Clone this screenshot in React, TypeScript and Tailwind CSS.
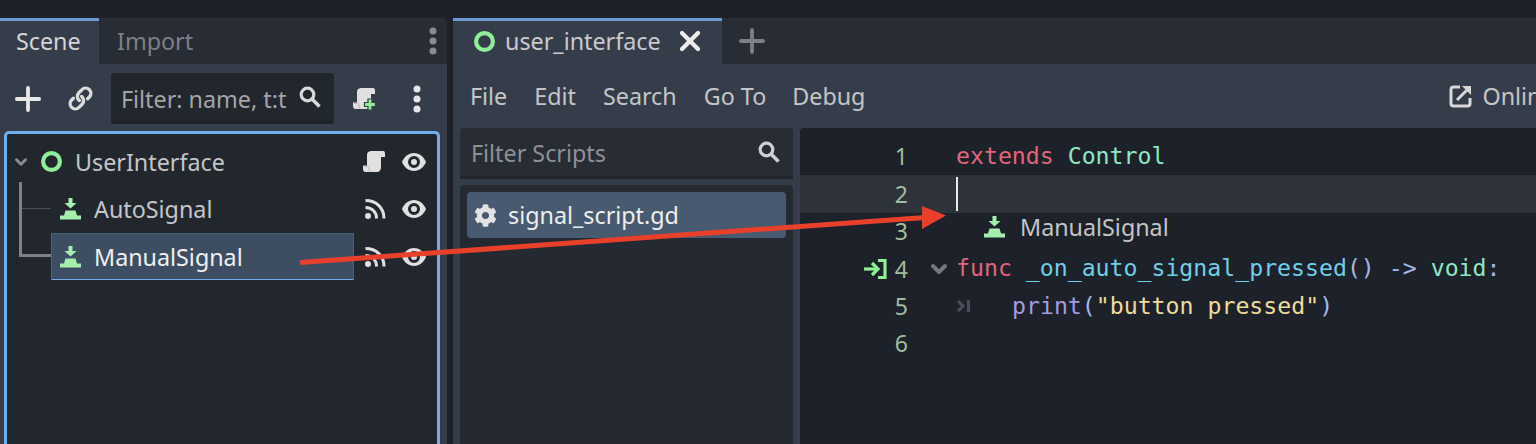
import { Link, Plus, X, ChevronDown } from 'lucide-react';
import { FaCog } from 'react-icons/fa';

const ui = "font-['Noto_Sans',sans-serif]";
const mono = "font-['DejaVu_Sans_Mono',monospace]";

function NodeRing({ className }: { className?: string }) {
  return (
    <svg viewBox="0 0 20 20" className={className}>
      <circle cx="10" cy="10" r="8" fill="none" stroke="#8eef97" strokeWidth="4" />
    </svg>
  );
}

function ButtonIcon({ className }: { className?: string }) {
  return (
    <svg viewBox="0 0 21 22" className={className} fill="#a5efac">
      <path d="M8.500 0h4v5h4l-6 5.500-6-5.500h4z" />
      <path d="M5.500 12.500h10L17 17.500h4v4H0v-4h4z" />
    </svg>
  );
}

function ScrollIcon({ className, plus }: { className?: string; plus?: boolean }) {
  return (
    <svg viewBox="0 0 24 24" className={className}>
      <path
        fill="#e0e0e0"
        d="M9.500 1H21c1.600 0 2 1 2 2.500V7h-4v10c0 3-1.600 5-4 5H3.500C1.500 22 1 20.500 1 19v-3.500h4V4.500C5 2.500 7 1 9.500 1z"
      />
      <path fill="none" stroke="#b8b8b8" strokeWidth="1" d="M2 16.500h3.500c1 0 1.500 1 1.500 2.500s.6 2.500 1.500 2.500" />
      {plus && <path fill="#8eef97" stroke="#363d4a" strokeWidth="1.200" d="M16 12h4v3.500h3.500v4H20V23h-4v-3.500h-3.500v-4H16z" />}
    </svg>
  );
}

function EyeIcon() {
  return (
    <svg viewBox="0 0 24 18" className="w-6 h-[18px]">
      <path
        fillRule="evenodd"
        fill="#e0e0e0"
        d="M12 0C6.500 0 2.200 3.800 0 9c2.200 5.200 6.500 9 12 9s9.800-3.800 12-9C21.800 3.800 17.500 0 12 0zm0 3a6 6 0 1 1 0 12 6 6 0 0 1 0-12z"
      />
      <circle cx="12" cy="9" r="3" fill="#e0e0e0" />
    </svg>
  );
}

function SignalIcon() {
  return (
    <svg viewBox="0 0 22 22" className="w-[22px] h-[22px]" fill="none" stroke="#e0e0e0" strokeWidth="3">
      <circle cx="4" cy="18" r="3" fill="#e0e0e0" stroke="none" />
      <path d="M1.500 9.500c6.500 0 11 4.500 11 11" />
      <path d="M1.500 2.500c11 0 18.500 7.500 18.500 18" />
    </svg>
  );
}

function DotsIcon({ color, className }: { color: string; className?: string }) {
  return (
    <svg viewBox="0 0 8 28" className={className} fill={color}>
      <circle cx="4" cy="4" r="3.500" />
      <circle cx="4" cy="14" r="3.500" />
      <circle cx="4" cy="24" r="3.500" />
    </svg>
  );
}

function SearchIcon({ color, className }: { color: string; className?: string }) {
  return (
    <svg viewBox="0 0 22 22" className={className} fill="none" stroke={color}>
      <circle cx="8.500" cy="8.500" r="6.300" strokeWidth="3.200" />
      <path d="M13 13l7.500 7.500" strokeWidth="3.500" />
    </svg>
  );
}

function TreeRow({ name, icon, selected, right }: { name: string; icon: React.ReactNode; selected?: boolean; right: React.ReactNode }) {
  return (
    <div className={`flex items-center h-[47px] ${selected ? 'mt-[1px]' : ''}`}>
      <div
        className={`flex items-center w-[303px] h-full text-[23.3px] ${
          selected
            ? 'pl-[8px] bg-[#3d4e63] border border-[#4c6076] border-b-[#70aeeb] text-[#f0f0f0] rounded-[1px]'
            : 'pl-[9px] text-[#c4c5c7]'
        }`}
      >
        {icon}
        <span className="ml-[13px] pt-[2px]">{name}</span>
      </div>
      {right}
    </div>
  );
}

function CodeRow({ n, active, gutter, fold, children }: { n: number; active?: boolean; gutter?: React.ReactNode; fold?: boolean; children?: React.ReactNode }) {
  return (
    <div className={`flex items-center h-[37.4px] ${active ? 'bg-[#2e323b]' : ''}`}>
      <div className="flex items-center w-[156px] shrink-0">
        <div className="w-[63px] shrink-0" />
        <div className="w-[26px] flex items-center shrink-0">{gutter}</div>
        <div className="w-[19px] text-right text-[23px] text-[#a3bb9f] shrink-0">{n}</div>
        <div className="w-[48px] pl-[19px] shrink-0">
          {fold && <ChevronDown className="w-[24px] h-[24px] text-[#74777c]" strokeWidth={4} />}
        </div>
      </div>
      <div className={`flex items-center text-[23.2px] whitespace-pre ${mono}`}>{children}</div>
    </div>
  );
}

export default function App() {
  return (
    <div className={`relative w-[1536px] h-[444px] overflow-hidden bg-[#1e2129] ${ui}`}>
      <div className="h-[18px]" />
      <div className="flex h-[426px]">
        {/* scene dock */}
        <div className="w-[447px] flex flex-col bg-[#363d4a] rounded-tr-md">
          <div className="flex h-[46px] bg-[#282c34] rounded-tr-md">
            <div className="w-[99px] bg-[#363d4a] border-t-[3px] border-[#6b9bd4] pl-[16px] text-[23.3px] text-[#d3d4d6] leading-[40px]">Scene</div>
            <div className="pl-[18px] text-[23.3px] text-[#7d8087] leading-[46px]">Import</div>
            <div className="ml-auto mr-[10px] flex items-center">
              <DotsIcon color="#8a8c91" className="w-[8px] h-[28px]" />
            </div>
          </div>
          <div className="flex items-center h-[67px] pt-[2px] pl-[9px]">
            <Plus className="w-[38px] h-[38px] text-[#e8e8e8]" strokeWidth={2.400} />
            <Link className="w-[25px] h-[25px] ml-[21px] text-[#dcdcdc] scale-x-[-1] rotate-90" strokeWidth={3.200} />
            <div className="flex items-center w-[223px] h-[51px] ml-[18px] px-[10px] bg-[#22262d] border-b-[3px] border-[#1e2127] rounded-[3px] text-[23.3px] text-[#a3a5a9]">
              <span className="whitespace-nowrap pt-[5px]">Filter: name, t:t</span>
              <SearchIcon color="#d8d8d8" className="w-[22px] h-[22px] ml-auto mr-[3px]" />
            </div>
            <ScrollIcon plus className="w-[24px] h-[24px] ml-[18px]" />
            <DotsIcon color="#e6e6e6" className="w-[8px] h-[28px] ml-[37px]" />
          </div>
          <div className="relative flex-1 ml-[4px] mr-[7px] pt-[4px] bg-[#22272e] border-[3px] border-b-0 border-[#70aeeb] rounded-t-[5px]">
            {/* tree guide lines */}
            <div className="absolute left-[12px] top-[48px] w-[3px] h-[75px] bg-[#7f8185]" />
            <div className="absolute left-[12px] top-[120px] w-[32px] h-[3px] bg-[#7f8185]" />
            <div className="absolute left-[15px] top-[74px] w-[29px] h-[1px] bg-[#4a4d52]" />

            <div className="flex items-center h-[47px] pl-[5px] text-[23.3px] text-[#c4c5c7]">
              <ChevronDown className="w-[18px] h-[18px] text-[#8a8c90]" strokeWidth={4} />
              <NodeRing className="w-[21px] h-[21px] ml-[11px]" />
              <span className="ml-[13px] pt-[2px]">UserInterface</span>
              <ScrollIcon className="w-[24px] h-[24px] ml-auto" />
              <span className="ml-[16px] mr-[11px]"><EyeIcon /></span>
            </div>
            <div className="pl-[44px]">
              <TreeRow
                name="AutoSignal"
                icon={<ButtonIcon className="w-[21px] h-[22px]" />}
                right={<div className="flex items-center ml-[10px] gap-[16px]"><SignalIcon /><EyeIcon /></div>}
              />
              <TreeRow
                selected
                name="ManualSignal"
                icon={<ButtonIcon className="w-[21px] h-[22px]" />}
                right={<div className="flex items-center ml-[10px] gap-[16px]"><SignalIcon /><EyeIcon /></div>}
              />
            </div>
          </div>
        </div>

        {/* script editor */}
        <div className="w-[1083px] ml-[6px] flex flex-col bg-[#363d4a]">
          <div className="flex h-[46px] bg-[#282c34] items-stretch">
            <div className="flex items-center w-[269px] bg-[#363d4a] border-t-[3px] border-[#6b9bd4] pl-[21px] pb-[3px] text-[23.3px] text-[#c9cacd]">
              <NodeRing className="w-[21px] h-[21px]" />
              <span className="ml-[10px]">user_interface</span>
              <X className="w-[32px] h-[32px] ml-[13px] text-[#ececec]" strokeWidth={3.200} />
            </div>
            <div className="flex items-center ml-[11px]">
              <Plus className="w-[38px] h-[38px] text-[#7c7f85]" strokeWidth={2.400} />
            </div>
          </div>
          <div className="flex items-center h-[64px] pl-[17px] text-[23.3px] text-[#c4c5c8] whitespace-nowrap">
            <span>File</span>
            <span className="ml-[27px]">Edit</span>
            <span className="ml-[27px]">Search</span>
            <span className="ml-[27px]">Go To</span>
            <span className="ml-[26px]">Debug</span>
            <svg viewBox="0 0 24 24" className="w-[24px] h-[24px] ml-[584px] shrink-0" fill="none" stroke="#d8d8d8" strokeWidth="3">
              <path d="M11 3H4.500C3 3 2 4 2 5.500v14C2 21 3 22 4.500 22h14c1.500 0 2.500-1 2.500-2.500V14" />
              <path d="M8 16L20 4" />
              <path d="M13 2h9v9z" fill="#d8d8d8" stroke="none" />
            </svg>
            <span className="ml-[9px]">Online Docs</span>
          </div>
          <div className="flex flex-1 min-h-0 pl-[7px]">
            <div className="w-[333px] flex flex-col gap-[6px]">
              <div className="flex items-center h-[51px] px-[11px] bg-[#282c34] border-b-[3px] border-[#22262c] rounded-t-[4px] text-[23.3px] text-[#8e9095]">
                <span className="pt-[3px]">Filter Scripts</span>
                <SearchIcon color="#d0d0d0" className="w-[22px] h-[22px] ml-auto mr-[2px]" />
              </div>
              <div className="flex-1 p-[7px] bg-[#252a32] rounded-t-[4px]">
                <div className="flex items-center h-[46px] pl-[7px] bg-[#475a70] rounded-[4px] text-[23.3px] text-[#eeeeee]">
                  <FaCog className="w-[23px] h-[23px] text-[#e2e2e2]" />
                  <span className="ml-[11px]">signal_script.gd</span>
                </div>
              </div>
            </div>
            <div className="flex-1 ml-[7px] pt-[10px] bg-[#1d2129] rounded-tl-[4px] overflow-hidden">
              <CodeRow n={1}>
                <span className="text-[#e0667a]">extends </span><span className="text-[#8fe8c4]">Control</span>
              </CodeRow>
              <CodeRow n={2} active>
                <div className="w-[2px] h-[34px] bg-[#e8e8e8]" />
              </CodeRow>
              <CodeRow n={3}>
                <div className={`flex items-center ml-[28px] mb-[8px] text-[23.3px] text-[#c4c5c7] ${ui}`}>
                  <ButtonIcon className="w-[21px] h-[22px]" />
                  <span className="ml-[15px]">ManualSignal</span>
                </div>
              </CodeRow>
              <CodeRow
                n={4}
                fold
                gutter={
                  <svg viewBox="0 0 24 22" className="w-[24px] h-[22px]" fill="none" stroke="#8eef97" strokeWidth="3.200">
                    <path d="M1 11h13" />
                    <path d="M9 5l6 6-6 6" />
                    <path d="M15 2.500h7v17h-7" />
                  </svg>
                }
              >
                <span className="text-[#e0667a]">func </span>
                <span className="text-[#70cfe8]">_on_auto_signal_pressed</span>
                <span className="text-[#a3b8e6]">() -&gt; </span>
                <span className="text-[#8fe8c4]">void</span><span className="text-[#a3b8e6]">:</span>
              </CodeRow>
              <CodeRow n={5}>
                <svg viewBox="0 0 16 16" className="w-[16px] h-[16px] shrink-0 mr-[40px]" fill="none" stroke="#4a4f5b" strokeWidth="3">
                  <path d="M2 3l5 5-5 5" />
                  <path d="M12.500 2v12" />
                </svg>
                <span className="text-[#a49be0]">print</span>
                <span className="text-[#a3b8e6]">(</span>
                <span className="text-[#eedc9a]">"button pressed"</span>
                <span className="text-[#a3b8e6]">)</span>
              </CodeRow>
              <CodeRow n={6} />
            </div>
          </div>
        </div>
      </div>

      {/* annotation arrow drawn over the screenshot */}
      <svg viewBox="0 0 1536 444" className="absolute inset-0 w-[1536px] h-[444px] pointer-events-none">
        <path d="M300 262.500L925 217.500" stroke="#e8402a" strokeWidth="5" fill="none" />
        <path d="M922 206L946 215.500 922 229z" fill="#e8402a" />
      </svg>
    </div>
  );
}
